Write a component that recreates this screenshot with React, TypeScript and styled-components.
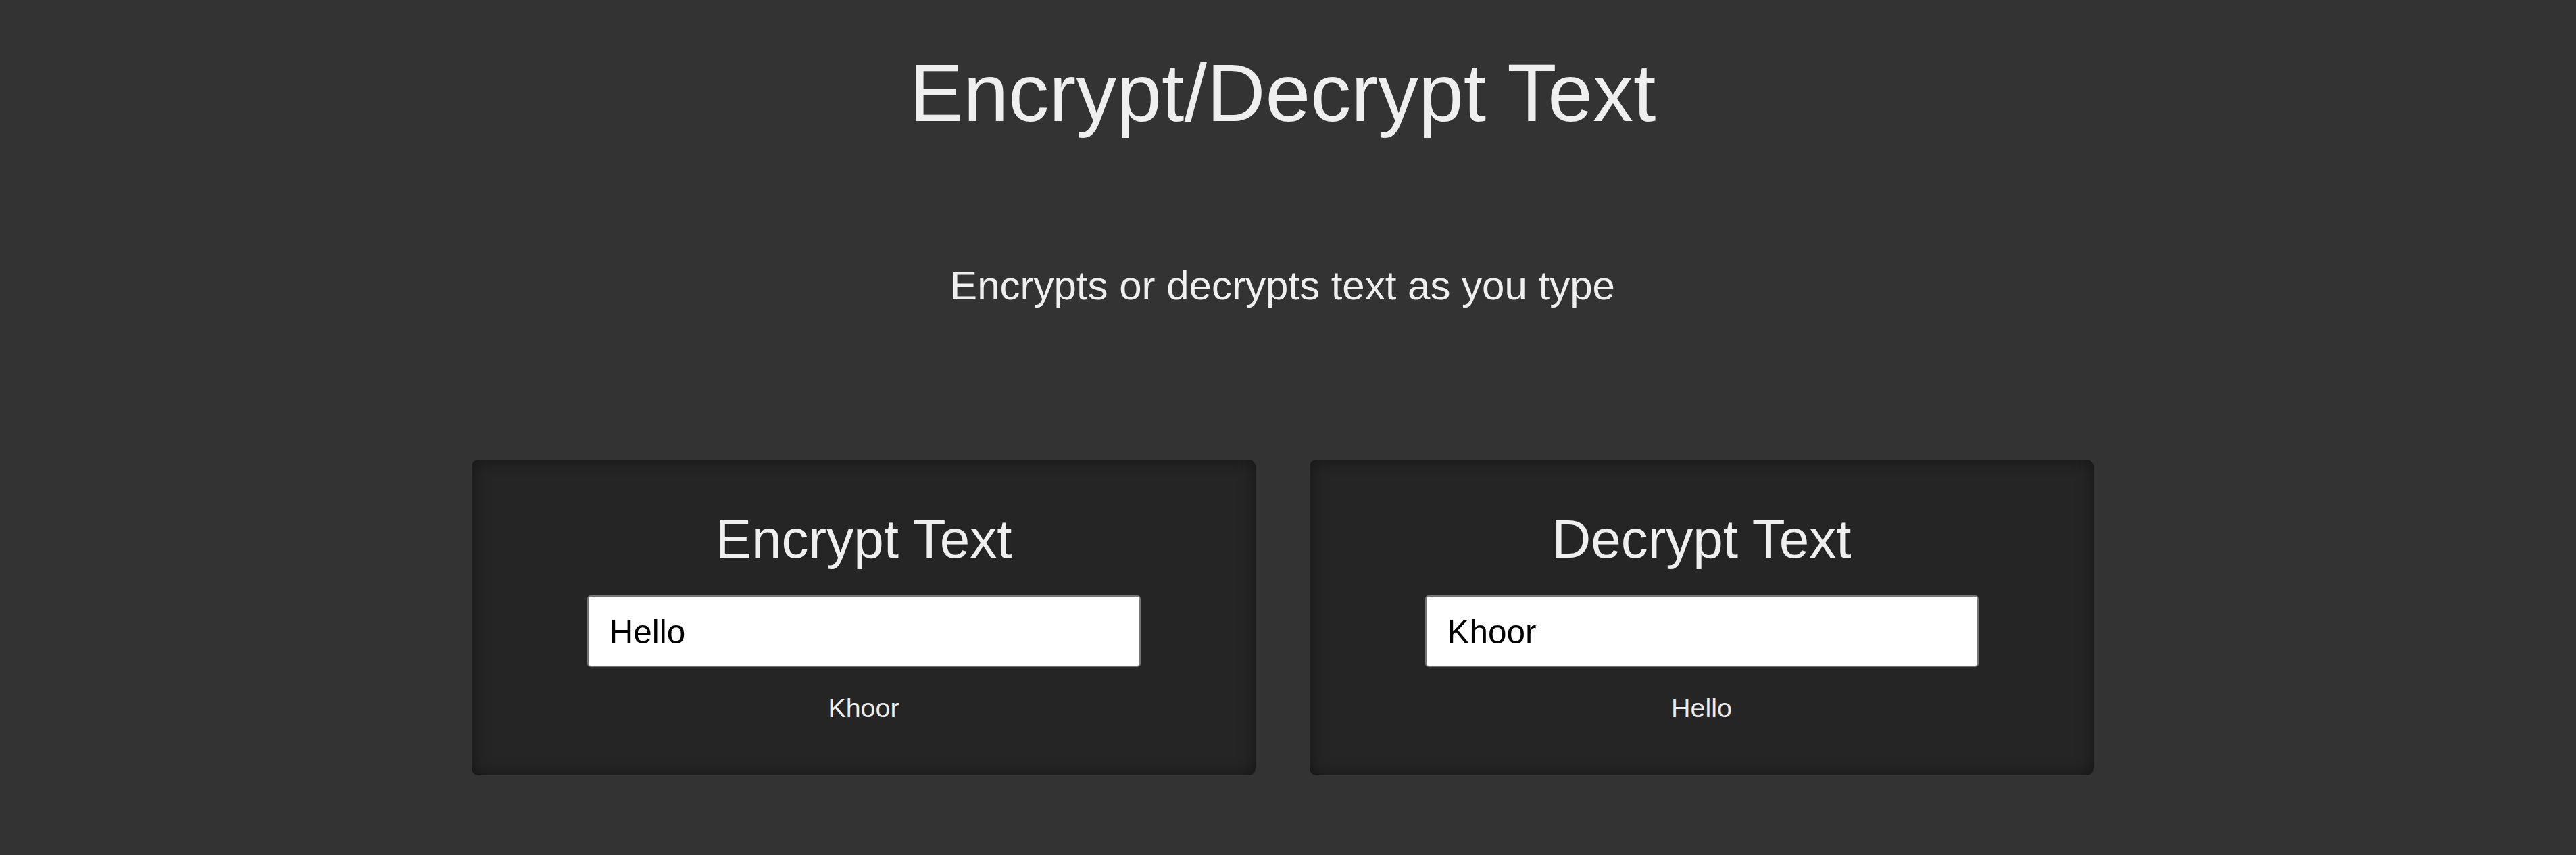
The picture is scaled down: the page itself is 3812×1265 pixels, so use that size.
import React, { useState } from 'react';
import styled, { createGlobalStyle } from 'styled-components';

const GlobalStyle = createGlobalStyle`
  html, body {
    margin: 0;
    padding: 0;
    background-color: #333333;
    font-family: "Liberation Sans", Arial, sans-serif;
  }
`;

const Page = styled.main`
  min-height: 1265px;
  display: flex;
  flex-direction: column;
  align-items: center;
  padding: 68px 16px 0 0;
  box-sizing: border-box;
  color: #eeeeee;
`;

const Title = styled.h1`
  margin: 0;
  font-size: 120px;
  font-weight: 400;
  line-height: normal;
  color: #efefef;
`;

const Subtitle = styled.p`
  margin: 182px 0 0;
  font-size: 60px;
  line-height: normal;
  color: #efefef;
`;

const Panels = styled.section`
  display: flex;
  gap: 80px;
  margin-top: 223px;
`;

const Panel = styled.div`
  width: 1160px;
  box-sizing: border-box;
  padding: 72px 0 77px;
  background-color: #252525;
  border-radius: 10px;
  box-shadow: inset 0 0 24px rgba(0, 0, 0, 0.45);
  display: flex;
  flex-direction: column;
  align-items: center;
`;

const PanelTitle = styled.h2`
  margin: 0;
  font-size: 80px;
  font-weight: 400;
  line-height: normal;
  color: #efefef;
`;

const TextInput = styled.input`
  margin-top: 37px;
  width: 819px;
  height: 106px;
  box-sizing: border-box;
  padding: 0 31px;
  border: 2px solid #767676;
  border-radius: 5px;
  background: #ffffff;
  color: #000000;
  font-family: "Liberation Sans", Arial, sans-serif;
  font-size: 49.5px;
  outline: none;
`;

const Output = styled.div`
  margin-top: 38px;
  font-size: 39.4px;
  line-height: normal;
  color: #eeeeee;
`;

const shift = (text: string, by: number) =>
  text.replace(/[a-z]/gi, (ch) => {
    const base = ch <= 'Z' ? 65 : 97;
    return String.fromCharCode(((ch.charCodeAt(0) - base + by + 26) % 26) + base);
  });

const CipherPanel: React.FC<{ title: string; initial: string; by: number }> = ({ title, initial, by }) => {
  const [value, setValue] = useState(initial);
  return (
    <Panel>
      <PanelTitle>{title}</PanelTitle>
      <TextInput value={value} onChange={(e) => setValue(e.target.value)} />
      <Output>{shift(value, by)}</Output>
    </Panel>
  );
};

const App: React.FC = () => (
  <>
    <GlobalStyle />
    <Page>
      <Title>Encrypt/Decrypt Text</Title>
      <Subtitle>Encrypts or decrypts text as you type</Subtitle>
      <Panels>
        <CipherPanel title="Encrypt Text" initial="Hello" by={3} />
        <CipherPanel title="Decrypt Text" initial="Khoor" by={-3} />
      </Panels>
    </Page>
  </>
);

export default App;
